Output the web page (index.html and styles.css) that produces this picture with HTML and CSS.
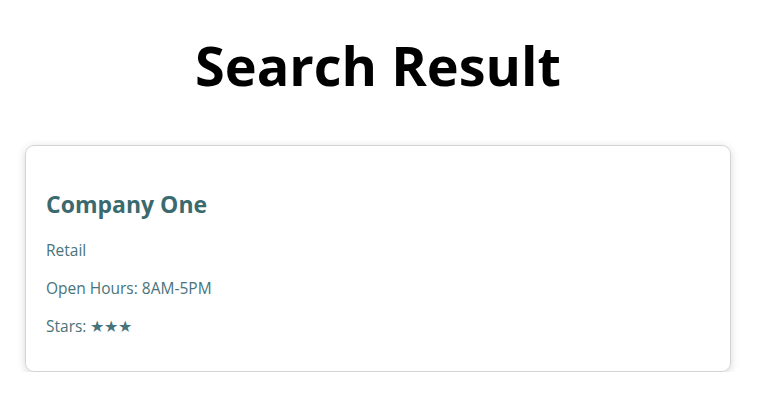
FILE: index.html
```html
<!DOCTYPE html>
<html>
<head>
<meta charset="utf-8">
<link rel="stylesheet" href="styles.css">
</head>
<body>
<h1 class="page-title">Search Result</h1>
<div class="results">
  <div class="card">
    <h2 class="card-title">Company One</h2>
    <p class="card-line">Retail</p>
    <p class="card-line">Open Hours: 8AM-5PM</p>
    <p class="card-line">Stars: ★★★</p>
  </div>
</div>
</body>
</html>
```

FILE: styles.css
```css
html, body {
  margin: 0;
  padding: 0;
  background: #fff;
}
body {
  font-family: "Open Sans", "Noto Sans", sans-serif;
  color: #3b6a6e;
}
.page-title {
  margin: 0;
  padding-top: 27px;
  height: 145px;
  box-sizing: border-box;
  text-align: center;
  font-size: 54px;
  line-height: 76px;
  font-weight: 700;
  color: #000;
  padding-right: 18px;
}
.results {
  padding: 0 43px 0 25px;
}
.card {
  border: 1px solid #d4d4d4;
  border-radius: 9px;
  box-shadow: 0 2px 8px rgba(0,0,0,0.16);
  padding: 32px 20px 20px 20px;
  height: 227px;
  box-sizing: border-box;
}
.card-title {
  margin: 11px 0 20px;
  font-size: 23px;
  line-height: 30px;
  font-weight: 700;
  color: #3b6a6e;
}
.card-line {
  margin: 0 0 16px;
  font-size: 15.5px;
  line-height: 22px;
  color: #47747a;
}
```
